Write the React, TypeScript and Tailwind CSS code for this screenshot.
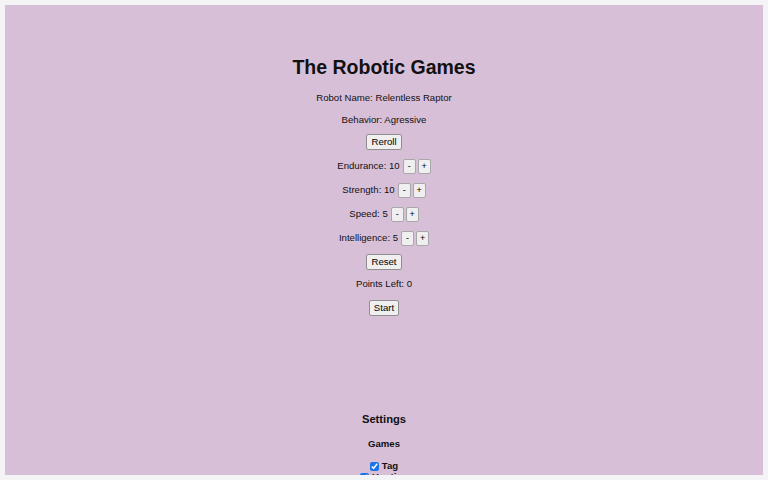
import React from "react";

const btn =
  "bg-[#efefef] border border-[#8f8f8f] rounded-[2px] text-[9.6px] leading-[12px] text-black px-[4px] py-[1px] h-[16px]";
const small =
  "bg-[#efefef] border border-[#a8a8a8] rounded-[2px] text-[9px] leading-[10px] text-black w-[13px] h-[15px] flex items-center justify-center";

function Stat({ label, value }: { label: string; value: number }) {
  return (
    <div className="flex items-center justify-center h-[16px] gap-[2px]">
      <span className="text-[9.6px] leading-[12px] mr-[1px]">
        {label}: {value}
      </span>
      <button className={small + " text-[#aaa]"}>-</button>
      <button className={small}>+</button>
    </div>
  );
}

export default function App() {
  return (
    <div
      className="h-screen w-full bg-[#f4f3f6] p-[5px]"
      style={{ fontFamily: '"Liberation Sans", Arial, sans-serif' }}
    >
      <div className="h-full w-full overflow-hidden bg-[#d8bfd8] text-[#111] text-center">
        <div className="flex flex-col items-center pt-[50px] gap-[8px]">
          <h1 className="text-[19.5px] leading-[24px] font-bold">The Robotic Games</h1>
          <div className="text-[9.6px] leading-[12px] mt-[5px]">Robot Name: Relentless Raptor</div>
          <div className="text-[9.6px] leading-[12px] mt-[2px]">Behavior: Agressive</div>
          <button className={btn}>Reroll</button>
          <Stat label="Endurance" value={10} />
          <Stat label="Strength" value={10} />
          <Stat label="Speed" value={5} />
          <Stat label="Intelligence" value={5} />
          <button className={btn}>Reset</button>
          <div className="text-[9.6px] leading-[12px]">Points Left: 0</div>
          <button className={btn + " mt-[2px]"}>Start</button>
        </div>
        <div className="flex flex-col items-center mt-[96px]">
          <h2 className="text-[11.2px] leading-[14px] font-bold">Settings</h2>
          <h3 className="text-[9.6px] leading-[12px] font-bold mt-[12px]">Games</h3>
          <label className="flex items-center text-[9.6px] leading-[12px] font-bold mt-[10px]">
            <input type="checkbox" defaultChecked className="w-[9px] h-[9px] m-0 mr-[3px] accent-[#1a73e8]" />
            Tag
          </label>
          <label className="flex items-center text-[9.6px] leading-[12px] font-bold -mt-[1px]">
            <input type="checkbox" defaultChecked className="w-[9px] h-[9px] m-0 mr-[3px] accent-[#1a73e8]" />
            Hunting
          </label>
        </div>
      </div>
    </div>
  );
}
